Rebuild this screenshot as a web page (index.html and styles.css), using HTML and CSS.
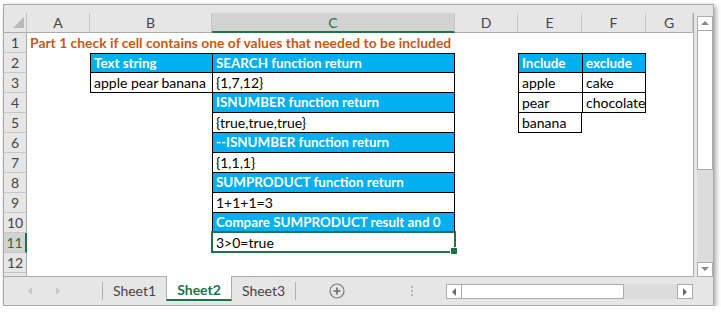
FILE: index.html
```html
<!DOCTYPE html>
<html lang="en">
<head>
    <meta charset="UTF-8">
    <title>Sheet2 - Excel</title>
    <link rel="stylesheet" href="styles.css">
</head>
<body>
    <div class="window">
        <div class="main">
            <div class="sheet">
                <div class="grid">
                    <!-- column headers -->
                    <div class="corner">
                        <svg width="23" height="20" viewBox="0 0 23 20"><polygon points="20,4 20,15 9,15" fill="#b7b7b7"/></svg>
                    </div>
                    <div class="ch">A</div>
                    <div class="ch">B</div>
                    <div class="ch ch-sel">C</div>
                    <div class="ch">D</div>
                    <div class="ch">E</div>
                    <div class="ch">F</div>
                    <div class="ch">G</div>

                    <!-- row 1 -->
                    <div class="rh">1</div>
                    <div class="cell title">Part 1 check if cell contains one of values that needed to be included</div>

                    <!-- row 2 -->
                    <div class="rh">2</div>
                    <div class="cell"></div>
                    <div class="cell hd l t b">Text string</div>
                    <div class="cell hd l t r b">SEARCH function return</div>
                    <div class="cell"></div>
                    <div class="cell hd l t b">Include</div>
                    <div class="cell hd l t r b">exclude</div>
                    <div class="cell"></div>

                    <!-- row 3 -->
                    <div class="rh">3</div>
                    <div class="cell"></div>
                    <div class="cell l b">apple pear banana</div>
                    <div class="cell l r b">{1,7,12}</div>
                    <div class="cell"></div>
                    <div class="cell l b">apple</div>
                    <div class="cell l r b">cake</div>
                    <div class="cell"></div>

                    <!-- row 4 -->
                    <div class="rh">4</div>
                    <div class="cell"></div>
                    <div class="cell"></div>
                    <div class="cell hd l r b">ISNUMBER function return</div>
                    <div class="cell"></div>
                    <div class="cell l b">pear</div>
                    <div class="cell l r b">chocolate</div>
                    <div class="cell"></div>

                    <!-- row 5 -->
                    <div class="rh">5</div>
                    <div class="cell"></div>
                    <div class="cell"></div>
                    <div class="cell l r b">{true,true,true}</div>
                    <div class="cell"></div>
                    <div class="cell l r b">banana</div>
                    <div class="cell"></div>
                    <div class="cell"></div>

                    <!-- row 6 -->
                    <div class="rh">6</div>
                    <div class="cell"></div>
                    <div class="cell"></div>
                    <div class="cell hd l r b">--ISNUMBER function return</div>
                    <div class="cell span4"></div>

                    <!-- row 7 -->
                    <div class="rh">7</div>
                    <div class="cell"></div>
                    <div class="cell"></div>
                    <div class="cell l r b">{1,1,1}</div>
                    <div class="cell span4"></div>

                    <!-- row 8 -->
                    <div class="rh">8</div>
                    <div class="cell"></div>
                    <div class="cell"></div>
                    <div class="cell hd l r b">SUMPRODUCT function return</div>
                    <div class="cell span4"></div>

                    <!-- row 9 -->
                    <div class="rh">9</div>
                    <div class="cell"></div>
                    <div class="cell"></div>
                    <div class="cell l r b">1+1+1=3</div>
                    <div class="cell span4"></div>

                    <!-- row 10 -->
                    <div class="rh">10</div>
                    <div class="cell"></div>
                    <div class="cell"></div>
                    <div class="cell hd l r b">Compare SUMPRODUCT result and 0</div>
                    <div class="cell span4"></div>

                    <!-- row 11 -->
                    <div class="rh rh-sel">11</div>
                    <div class="cell"></div>
                    <div class="cell"></div>
                    <div class="cell l r b selected">3&gt;0=true</div>
                    <div class="cell span4"></div>

                    <!-- row 12 -->
                    <div class="rh">12</div>
                    <div class="cell rest"></div>

                    <div class="rh rh-end"></div>
                    <div class="cell rest"></div>
                </div>
            </div>

            <div class="vscroll">
                <div class="sb-btn">
                    <svg width="8" height="5" viewBox="0 0 8 5"><polygon points="0,4 4,0 8,4" fill="#8a8a8a"/></svg>
                </div>
                <div class="vthumb"></div>
                <div class="vtrack"></div>
                <div class="sb-btn">
                    <svg width="8" height="5" viewBox="0 0 8 5"><polygon points="0,0 8,0 4,4" fill="#8a8a8a"/></svg>
                </div>
            </div>
        </div>

        <div class="tabbar">
            <div class="nav">
                <svg width="5" height="8" viewBox="0 0 5 8"><polygon points="4,0 4,8 0,4" fill="#c8c8c8"/></svg>
                <svg width="5" height="8" viewBox="0 0 5 8"><polygon points="0,0 0,8 4,4" fill="#c8c8c8"/></svg>
            </div>
            <div class="tab-sep"></div>
            <div class="tab">Sheet1</div>
            <div class="tab tab-active">Sheet2</div>
            <div class="tab">Sheet3</div>
            <div class="tab-sep"></div>
            <div class="add">
                <svg width="16" height="16" viewBox="0 0 16 16">
                    <circle cx="8" cy="8" r="7" fill="none" stroke="#7a7a7a" stroke-width="1.2"/>
                    <path d="M8 4.5v7M4.5 8h7" stroke="#6a6a6a" stroke-width="1.6"/>
                </svg>
            </div>
            <div class="dots">
                <span></span><span></span><span></span>
            </div>
            <div class="hscroll">
                <div class="sb-btn h">
                    <svg width="5" height="8" viewBox="0 0 5 8"><polygon points="4,0 4,8 0,4" fill="#6a6a6a"/></svg>
                </div>
                <div class="hthumb"></div>
                <div class="htrack"></div>
                <div class="sb-btn h">
                    <svg width="5" height="8" viewBox="0 0 5 8"><polygon points="0,0 0,8 4,4" fill="#6a6a6a"/></svg>
                </div>
            </div>
        </div>
    </div>
</body>
</html>
```

FILE: styles.css
```css
* {
    margin: 0;
    padding: 0;
    box-sizing: border-box;
}

body {
    background-color: #fff;
    font-family: 'Lato', 'Liberation Sans', sans-serif;
    font-size: 14px;
    color: #000;
}

.window {
    margin: 4px 0 0 3px;
    width: 711px;
    height: 302px;
    border: 1px solid #a9a9a9;
    background-color: #e6e6e6;
    box-shadow: 2px 2px 5px rgba(0, 0, 0, 0.35);
    display: flex;
    flex-direction: column;
}

.main {
    height: 272px;
    display: flex;
    padding-top: 8px;
}

.sheet {
    width: 690px;
    height: 264px;
    background-color: #fff;
    border-right: 1px solid #ababab;
    border-bottom: 1px solid #ababab;
    overflow: hidden;
}

.grid {
    display: grid;
    grid-template-columns: 23px 63px 122px 243px 63px 64px 64px 47px;
    grid-template-rows: repeat(13, 20px) 3px;
}

/* headers */
.corner {
    background-color: #e6e6e6;
    border-right: 1px solid #c0c0c0;
    border-bottom: 1px solid #ababab;
}

.corner svg {
    display: block;
}

.ch {
    background-color: #e6e6e6;
    border-right: 1px solid #c6c6c6;
    border-bottom: 1px solid #ababab;
    text-align: center;
    line-height: 20px;
    color: #444;
}

.ch-sel {
    background-color: #d2d2d2;
    border-bottom: 2px solid #217346;
    color: #217346;
}

.rh {
    background-color: #e6e6e6;
    border-right: 1px solid #ababab;
    border-bottom: 1px solid #c6c6c6;
    text-align: center;
    line-height: 20px;
    color: #444;
}

.rh-sel {
    background-color: #d2d2d2;
    border-right: 2px solid #217346;
    color: #217346;
}

.rh-end {
    border-bottom: none;
}

/* cells */
.cell {
    padding-left: 3px;
    line-height: 19px;
    white-space: nowrap;
}

.span4 {
    grid-column: span 4;
}

.rest {
    grid-column: 2 / -1;
}

.title {
    grid-column: 2 / -1;
    color: #c55a11;
    font-weight: bold;
    font-size: 13.9px;
    line-height: 20px;
}

.hd {
    background-color: #00b0f0;
    color: #fff;
    font-weight: bold;
    font-size: 13.4px;
}

.l { border-left: 1px solid #000; }
.t { border-top: 1px solid #000; }
.r { border-right: 1px solid #000; }
.b { border-bottom: 1px solid #000; }

.t {
    line-height: 18px;
}

.selected {
    position: relative;
}

.selected::after {
    content: '';
    position: absolute;
    top: -2px;
    left: -2px;
    right: -2px;
    bottom: -1px;
    border: 2px solid #217346;
}

.selected::before {
    content: '';
    position: absolute;
    right: -4px;
    bottom: -3px;
    width: 6px;
    height: 6px;
    background-color: #217346;
    border: 1px solid #fff;
    z-index: 1;
}

/* vertical scrollbar */
.vscroll {
    width: 16px;
    margin: 3px 0 0 3px;
    display: flex;
    flex-direction: column;
    background-color: #dcdcdc;
}

.sb-btn {
    width: 16px;
    height: 15px;
    background-color: #fff;
    border: 1px solid #ababab;
    display: flex;
    align-items: center;
    justify-content: center;
}

.vthumb {
    height: 139px;
    background-color: #fff;
    border: 1px solid #ababab;
    border-top: none;
}

.vtrack {
    flex-grow: 1;
}

/* sheet tabs */
.tabbar {
    height: 28px;
    display: flex;
    align-items: stretch;
    font-size: 14px;
}

.nav {
    width: 98px;
    display: flex;
    align-items: center;
    gap: 23px;
    padding-left: 24px;
}

.tab-sep {
    width: 1px;
    margin: 5px 0 5px;
    background-color: #b0b0b0;
}

.tab {
    width: 63px;
    text-align: center;
    line-height: 27px;
    color: #444;
}

.tab-active {
    width: 66px;
    background-color: #fff;
    border-left: 1px solid #ababab;
    border-right: 1px solid #ababab;
    border-bottom: 2px solid #217346;
    margin-bottom: 4px;
    margin-top: -1px;
    line-height: 28px;
    color: #217346;
    font-weight: bold;
}

.add {
    width: 82px;
    display: flex;
    align-items: center;
    justify-content: center;
}

.dots {
    width: 68px;
    display: flex;
    flex-direction: column;
    align-items: center;
    justify-content: center;
    gap: 2px;
}

.dots span {
    width: 2px;
    height: 2px;
    background-color: #b5b5b5;
}

.hscroll {
    width: 247px;
    height: 15px;
    margin-top: 7px;
    display: flex;
    background-color: #dcdcdc;
}

.sb-btn.h {
    width: 16px;
    height: 15px;
}

.hthumb {
    width: 162px;
    background-color: #fff;
    border: 1px solid #ababab;
    border-left: none;
}

.htrack {
    flex-grow: 1;
}
```
